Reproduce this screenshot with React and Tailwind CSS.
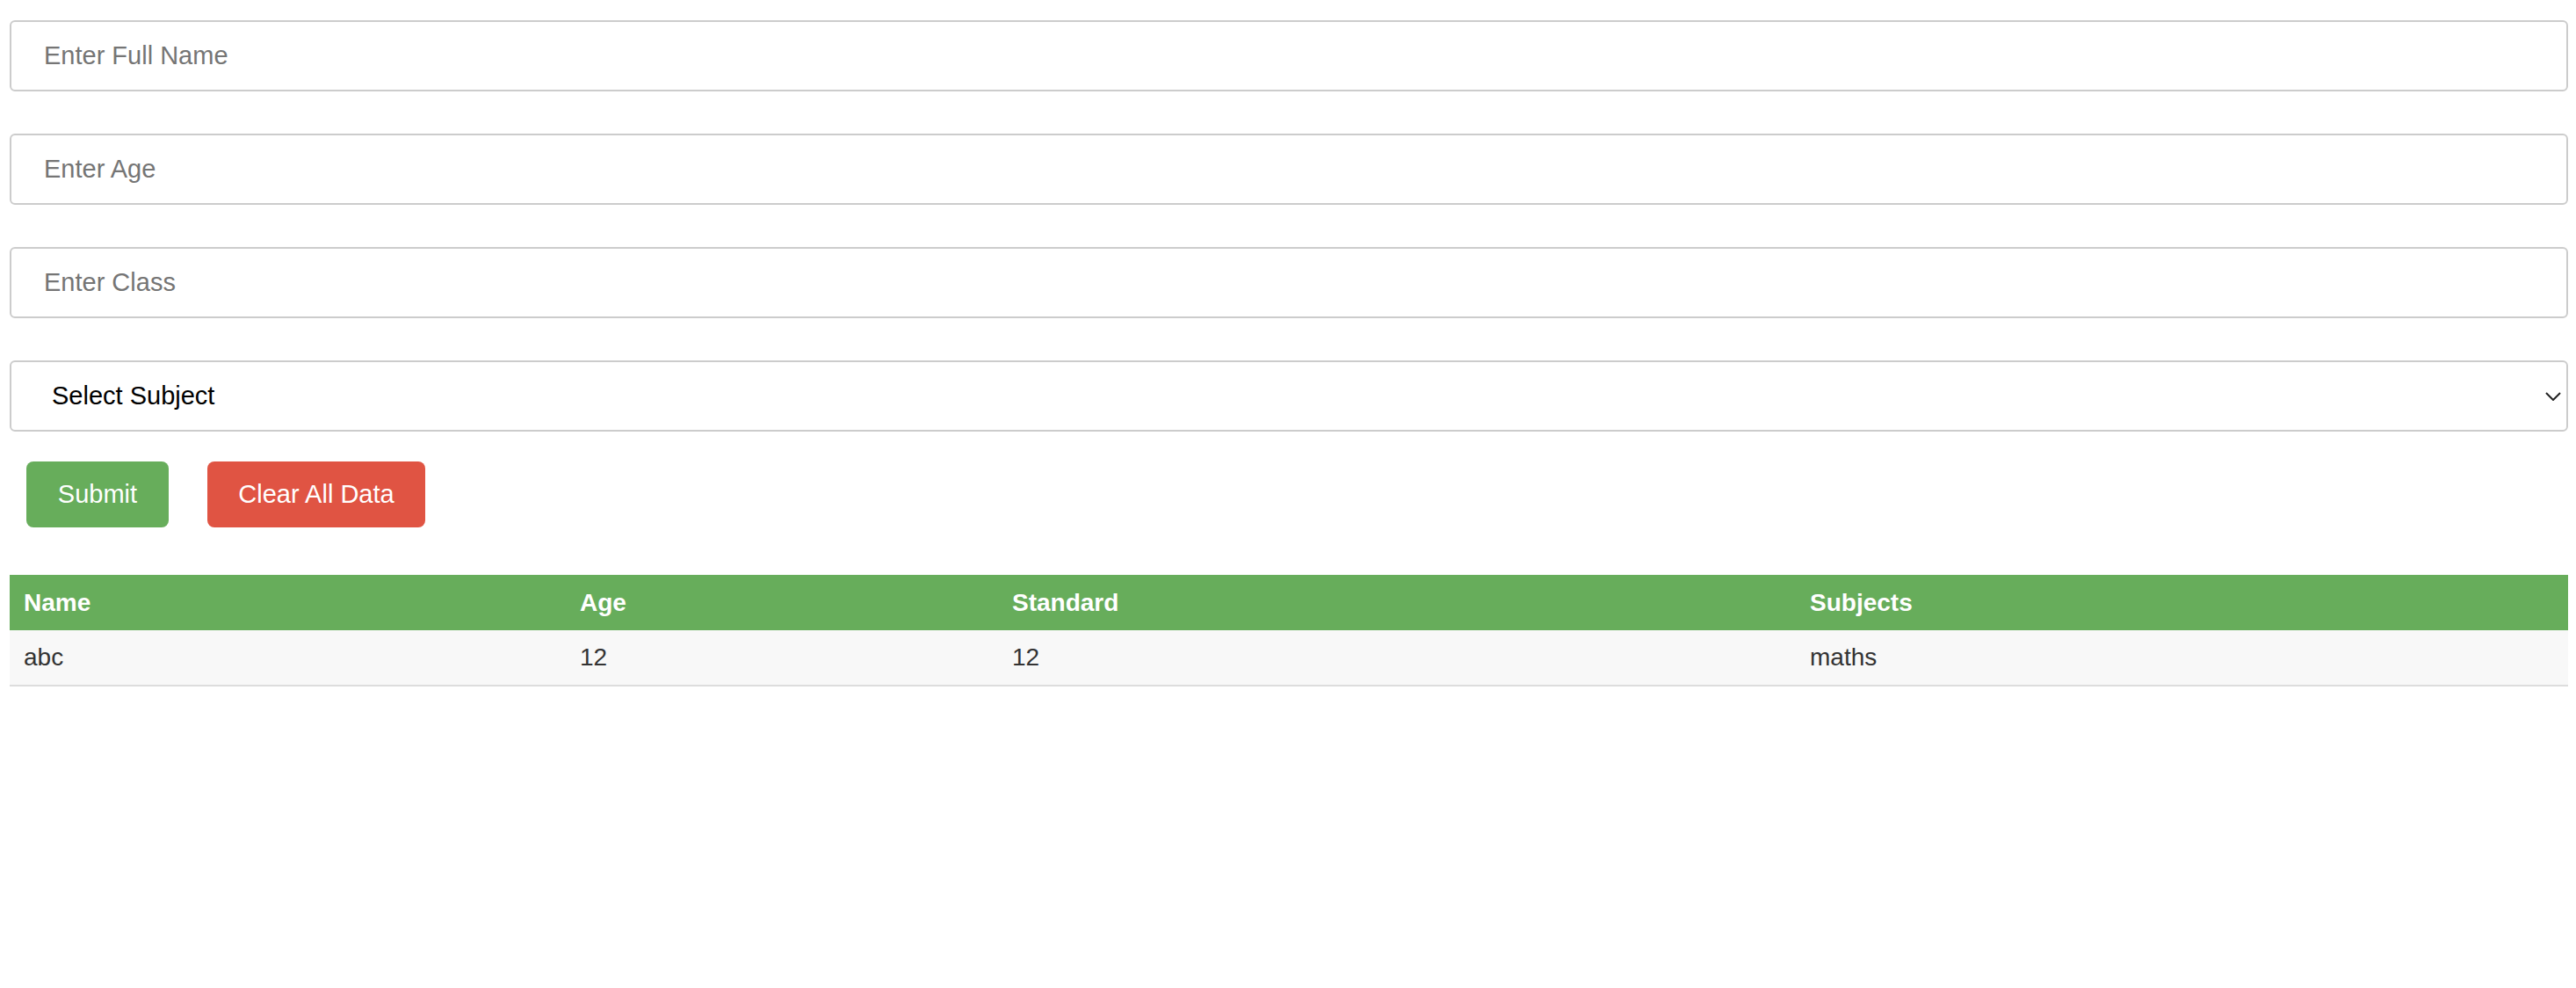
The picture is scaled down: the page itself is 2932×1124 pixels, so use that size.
import React, { useState } from "react";

const rows = [{ name: "abc", age: "12", standard: "12", subjects: "maths" }];

const App = () => {
  const [subject, setSubject] = useState("");

  return (
    <div
      className="min-h-screen bg-white pl-[11px] pr-[9px] pt-[23px]"
      style={{ fontFamily: '"Liberation Sans", Arial, sans-serif' }}
    >
      <div className="flex flex-col gap-[48px]">
        <input
          type="text"
          placeholder="Enter Full Name"
          className="h-[81px] w-full rounded-[6px] border-2 border-[#cccccc] bg-white pl-[37px] text-[29px] text-black outline-none placeholder:text-[#757575]"
        />
        <input
          type="number"
          placeholder="Enter Age"
          className="h-[81px] w-full rounded-[6px] border-2 border-[#cccccc] bg-white pl-[37px] text-[29px] text-black outline-none placeholder:text-[#757575]"
        />
        <input
          type="text"
          placeholder="Enter Class"
          className="h-[81px] w-full rounded-[6px] border-2 border-[#cccccc] bg-white pl-[37px] text-[29px] text-black outline-none placeholder:text-[#757575]"
        />
        <div className="relative">
          <select
            value={subject}
            onChange={(e) => setSubject(e.target.value)}
            className="h-[81px] w-full appearance-none rounded-[6px] border-2 border-[#cccccc] bg-white pl-[46px] text-[29px] text-black outline-none"
          >
            <option value="">Select Subject</option>
            <option value="maths">maths</option>
            <option value="science">science</option>
            <option value="english">english</option>
          </select>
          {/* dropdown chevron */}
          <svg
            className="pointer-events-none absolute right-[8px] top-1/2 h-[10px] w-[18px] -translate-y-1/2"
            viewBox="0 0 18 10"
            fill="none"
          >
            <path d="M1 1l8 8 8-8" stroke="#222" strokeWidth="2" />
          </svg>
        </div>
      </div>

      <div className="ml-[19px] mt-[34px] flex gap-[44px]">
        <button className="h-[75px] w-[162px] rounded-[8px] bg-[#67ad5b] text-[29px] text-white">
          Submit
        </button>
        <button className="h-[75px] w-[248px] rounded-[8px] bg-[#e05443] text-[29px] text-white">
          Clear All Data
        </button>
      </div>

      <table className="mt-[54px] w-full table-fixed border-collapse text-[28px]">
        <thead>
          <tr className="h-[63px] bg-[#67ad5b] text-left text-white">
            <th className="w-[634px] pl-[16px] font-bold">Name</th>
            <th className="w-[492px] pl-[15px] font-bold">Age</th>
            <th className="w-[908px] pl-[15px] font-bold">Standard</th>
            <th className="pl-[15px] font-bold">Subjects</th>
          </tr>
        </thead>
        <tbody>
          {rows.map((row, i) => (
            <tr
              key={i}
              className="h-[63px] border-b-2 border-[#dddddd] bg-[#f8f8f8] text-[#333333]"
            >
              <td className="pl-[16px]">{row.name}</td>
              <td className="pl-[15px]">{row.age}</td>
              <td className="pl-[15px]">{row.standard}</td>
              <td className="pl-[15px]">{row.subjects}</td>
            </tr>
          ))}
        </tbody>
      </table>
    </div>
  );
};

export default App;
